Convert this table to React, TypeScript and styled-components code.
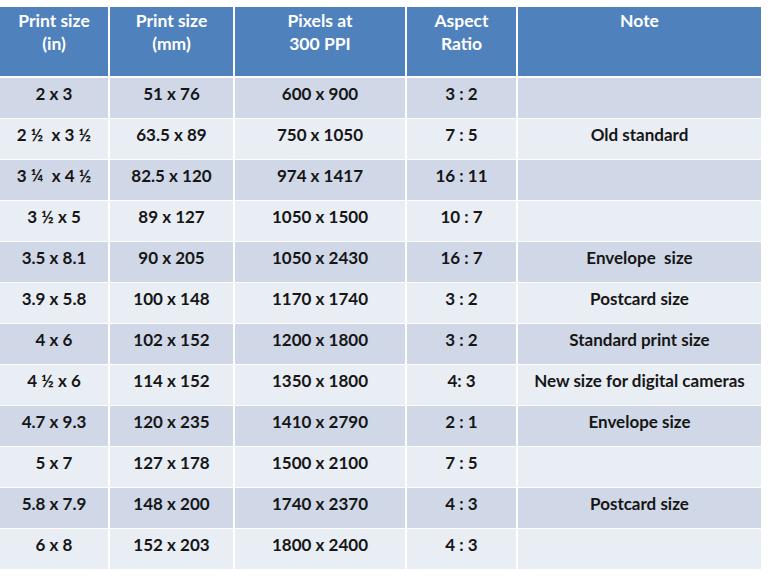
import * as React from "react";
import styled, { createGlobalStyle } from "styled-components";

const GlobalStyle = createGlobalStyle`
  html, body {
    margin: 0;
    padding: 0;
    background: #ffffff;
  }
  body {
    font-family: Lato, "Liberation Sans", sans-serif;
  }
`;

const Page = styled.div`
  width: 768px;
  height: 576px;
  padding: 7px 0 0 0;
  box-sizing: border-box;
  background: #ffffff;
`;

const Table = styled.div`
  width: 761px;
  display: grid;
  grid-template-columns: 108px 123px 170px 109px 243px;
  column-gap: 2px;
  row-gap: 1px;
`;

const HeadCell = styled.div`
  height: 69px;
  margin-bottom: 1px;
  background: #4f81bd;
  color: #ffffff;
  font-size: 17.5px;
  font-weight: 700;
  line-height: 23px;
  text-align: center;
  padding-top: 2px;
  box-sizing: border-box;
`;

const Cell = styled.div<{ $shade: boolean }>`
  height: 40px;
  background: ${(p) => (p.$shade ? "#d0d8e8" : "#e9edf4")};
  color: #161616;
  font-size: 17px;
  font-weight: 700;
  line-height: 18px;
  text-align: center;
  padding-top: 7px;
  box-sizing: border-box;
  white-space: pre;
`;

const headers = [
  ["Print size", "(in)"],
  ["Print size", "(mm)"],
  ["Pixels at", "300 PPI"],
  ["Aspect", "Ratio"],
  ["Note"],
];

const rows = [
  ["2 x 3", "51 x 76", "600 x 900", "3 : 2", ""],
  ["2 \u00bd  x 3 \u00bd", "63.5 x 89", "750 x 1050", "7 : 5", "Old standard"],
  ["3 \u00bc  x 4 \u00bd", "82.5 x 120", "974 x 1417", "16 : 11", ""],
  ["3 \u00bd x 5", "89 x 127", "1050 x 1500", "10 : 7", ""],
  ["3.5 x 8.1", "90 x 205", "1050 x 2430", "16 : 7", "Envelope  size"],
  ["3.9 x 5.8", "100 x 148", "1170 x 1740", "3 : 2", "Postcard size"],
  ["4 x 6", "102 x 152", "1200 x 1800", "3 : 2", "Standard print size"],
  ["4 \u00bd x 6", "114 x 152", "1350 x 1800", "4: 3", "New size for digital cameras"],
  ["4.7 x 9.3", "120 x 235", "1410 x 2790", "2 : 1", "Envelope size"],
  ["5 x 7", "127 x 178", "1500 x 2100", "7 : 5", ""],
  ["5.8 x 7.9", "148 x 200", "1740 x 2370", "4 : 3", "Postcard size"],
  ["6 x 8", "152 x 203", "1800 x 2400", "4 : 3", ""],
];

const App: React.FC = () => {
  return (
    <Page>
      <GlobalStyle />
      <Table>
        {headers.map((h, i) => (
          <HeadCell key={"h" + i}>
            {h.map((line, j) => (
              <div key={j}>{line}</div>
            ))}
          </HeadCell>
        ))}
        {rows.map((r, ri) =>
          r.map((c, ci) => (
            <Cell key={ri + "-" + ci} $shade={ri % 2 === 0}>
              {c}
            </Cell>
          ))
        )}
      </Table>
    </Page>
  );
};

export default App;
